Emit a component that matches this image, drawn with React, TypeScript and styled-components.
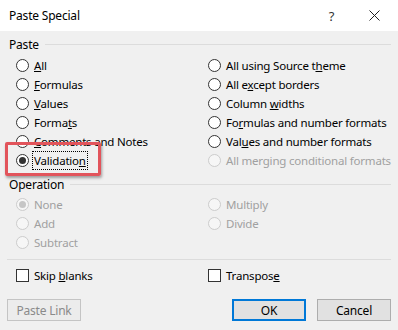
import * as React from 'react'
import styled, { createGlobalStyle } from 'styled-components'

const GlobalStyle = createGlobalStyle`
  html, body {
    margin: 0;
    padding: 0;
    background: #f0f0f0;
  }
  body {
    font-family: 'Noto Sans', 'Open Sans', sans-serif;
    font-size: 11.5px;
    color: #000;
  }
`

const Dialog = styled.div`
  position: relative;
  width: 398px;
  height: 330px;
  background: #f0f0f0;
  overflow: hidden;
`

const TitleBar = styled.div`
  height: 31px;
  background: #fff;
  display: flex;
  align-items: center;
  padding-left: 9px;
  padding-right: 2px;
`

const Title = styled.div`
  flex: 1;
  font-size: 12px;
  letter-spacing: -0.2px;
`

const TitleButton = styled.div`
  width: 43px;
  display: flex;
  justify-content: center;
  align-items: center;
  color: #333;
  font-size: 13px;
`

const Body = styled.div`
  padding: 0 7px 0 7px;
`

const SectionHeader = styled.div<{ $top: number }>`
  display: flex;
  align-items: center;
  gap: 6px;
  height: 18px;
  margin-top: ${p => p.$top}px;
  padding-left: 2px;
  font-size: 12px;
  letter-spacing: -0.2px;

  &::after {
    content: '';
    flex: 1;
    height: 1px;
    background: #dcdcdc;
  }
`

const OptionGrid = styled.div<{ $top: number }>`
  display: grid;
  grid-template-columns: 192px 1fr;
  grid-auto-rows: 19px;
  margin-top: ${p => p.$top}px;
  padding-left: 9px;
`

const Option = styled.div<{ $disabled?: boolean }>`
  display: flex;
  align-items: center;
  gap: 5px;
  color: ${p => (p.$disabled ? '#a0a0a0' : '#000')};
  white-space: nowrap;
  letter-spacing: -0.2px;
`

const RadioCircle = styled.span<{ $checked?: boolean; $disabled?: boolean }>`
  width: 13px;
  height: 13px;
  box-sizing: border-box;
  border-radius: 50%;
  border: 1px solid ${p => (p.$disabled ? '#cccccc' : '#333')};
  background: ${p => (p.$disabled ? '#f6f6f6' : '#fff')};
  display: flex;
  align-items: center;
  justify-content: center;
  flex: none;

  &::after {
    content: '';
    display: ${p => (p.$checked ? 'block' : 'none')};
    width: 7px;
    height: 7px;
    border-radius: 50%;
    background: ${p => (p.$disabled ? '#c6c6c6' : '#333')};
  }
`

const CheckBox = styled.span`
  width: 13px;
  height: 13px;
  box-sizing: border-box;
  border: 1px solid #333;
  background: #fff;
  flex: none;
`

const Focus = styled.span`
  outline: 1px dotted #000;
  outline-offset: 1px;
`

const Divider = styled.div<{ $top: number }>`
  height: 1px;
  background: #dcdcdc;
  margin-top: ${p => p.$top}px;
`

const ButtonRow = styled.div`
  display: flex;
  align-items: center;
  gap: 11px;
  margin-top: 14px;
  height: 22px;
`

const Button = styled.div<{ $variant?: 'default' | 'disabled' }>`
  width: 74px;
  height: 22px;
  box-sizing: border-box;
  display: flex;
  align-items: center;
  justify-content: center;
  font-size: 12px;
  letter-spacing: -0.2px;
  background: ${p => (p.$variant === 'disabled' ? '#ececec' : '#e1e1e1')};
  color: ${p => (p.$variant === 'disabled' ? '#8a8a8a' : '#000')};
  border: ${p =>
    p.$variant === 'default'
      ? '2px solid #0078d7'
      : p.$variant === 'disabled'
      ? '1px solid #c4c4c4'
      : '1px solid #adadad'};
`

const Spacer = styled.div`
  flex: 1;
`

const Highlight = styled.div`
  position: absolute;
  left: 5px;
  top: 142px;
  width: 96px;
  height: 34px;
  box-sizing: border-box;
  border: 3px solid #e2545b;
  border-radius: 2px;
  box-shadow: 1px 2px 3px rgba(0, 0, 0, 0.35);
  pointer-events: none;
`

type Opt = {
  label: React.ReactNode
  checked?: boolean
  disabled?: boolean
  focus?: boolean
}

const u = (s: string) => <u>{s}</u>

const pasteOptions: Opt[] = [
  { label: <>{u('A')}ll</> },
  { label: <>All using Source t{u('h')}eme</> },
  { label: <>{u('F')}ormulas</> },
  { label: <>All e{u('x')}cept borders</> },
  { label: <>{u('V')}alues</> },
  { label: <>Column {u('w')}idths</> },
  { label: <>Forma{u('t')}s</> },
  { label: <>Fo{u('r')}mulas and number formats</> },
  { label: <>{u('C')}omments and Notes</> },
  { label: <>Val{u('u')}es and number formats</> },
  { label: <>Validatio{u('n')}</>, checked: true, focus: true },
  { label: <>All merging conditional formats</>, disabled: true },
]

const operationOptions: Opt[] = [
  { label: 'None', checked: true, disabled: true },
  { label: 'Multiply', disabled: true },
  { label: 'Add', disabled: true },
  { label: 'Divide', disabled: true },
  { label: 'Subtract', disabled: true },
]

const Radio = ({ label, checked, disabled, focus }: Opt) => (
  <Option $disabled={disabled}>
    <RadioCircle $checked={checked} $disabled={disabled} />
    {focus ? <Focus>{label}</Focus> : <span>{label}</span>}
  </Option>
)

const Check = ({ label }: { label: React.ReactNode }) => (
  <Option>
    <CheckBox />
    <span>{label}</span>
  </Option>
)

const CloseIcon = () => (
  <svg width='11' height='11' viewBox='0 0 11 11'>
    <path d='M0.5 0.5 L10.5 10.5 M10.5 0.5 L0.5 10.5' stroke='#222' strokeWidth='1' />
  </svg>
)

export default function App() {
  return (
    <>
      <GlobalStyle />
      <Dialog>
        <TitleBar>
          <Title>Paste Special</Title>
          <TitleButton>?</TitleButton>
          <TitleButton><CloseIcon /></TitleButton>
        </TitleBar>
        <Body>
          <SectionHeader $top={4}>Paste</SectionHeader>
          <OptionGrid $top={3}>
            {pasteOptions.map((o, i) => <Radio key={i} {...o} />)}
          </OptionGrid>
          <SectionHeader $top={5}>Operation</SectionHeader>
          <OptionGrid $top={2}>
            {operationOptions.map((o, i) => <Radio key={i} {...o} />)}
          </OptionGrid>
          <Divider $top={7} />
          <OptionGrid $top={6}>
            <Check label={<>Skip {u('b')}lanks</>} />
            <Check label={<>Transpos{u('e')}</>} />
          </OptionGrid>
          <ButtonRow>
            <Button $variant='disabled'>Paste Link</Button>
            <Spacer />
            <Button $variant='default'>OK</Button>
            <Button>Cancel</Button>
          </ButtonRow>
        </Body>
        <Highlight />
      </Dialog>
    </>
  )
}
